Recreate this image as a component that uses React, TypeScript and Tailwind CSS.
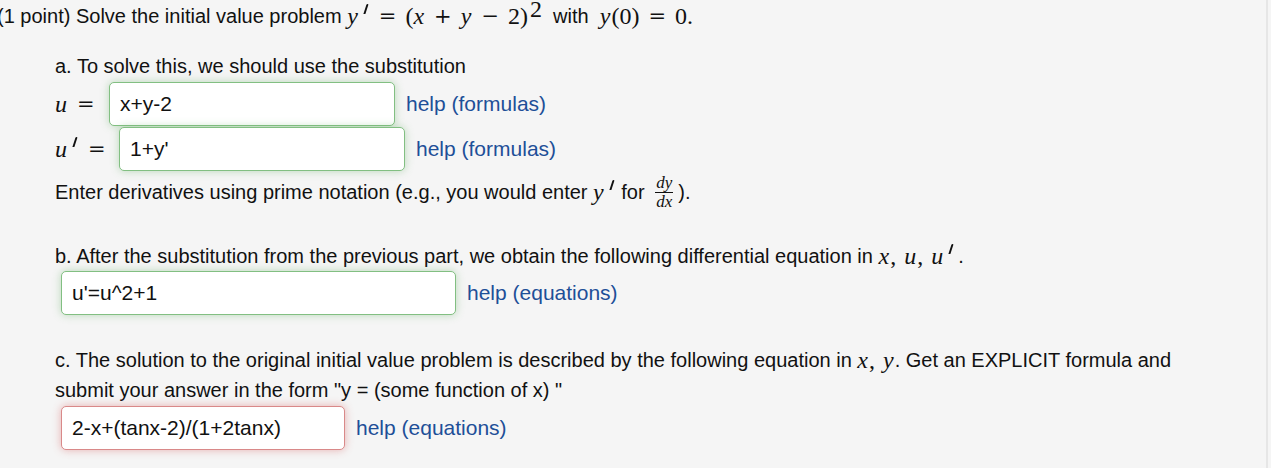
import React from 'react';

// ── Math helpers (TeX-like serif) ─────────────────────────────────────────────

function V({ children }: { children: React.ReactNode }) {
  return (
    <span className="font-['Liberation_Serif',serif] italic text-[24px] leading-none tracking-[1px]">{children}</span>
  );
}

function R({ children, className = '' }: { children: React.ReactNode; className?: string }) {
  return <span className={`font-['Liberation_Serif',serif] text-[24px] leading-none ${className}`}>{children}</span>;
}

function Prime() {
  return (
    <span className="inline-block w-[2px] h-[10px] bg-[#111] rounded-t-[2px] skew-x-[-18deg] relative top-[-7px] ml-[6px] mr-[3px]" />
  );
}

function Op({ children }: { children: React.ReactNode }) {
  return <span className="font-['DejaVu_Serif',serif] text-[21px] leading-none mx-[9px]">{children}</span>;
}

function Comma() {
  return <R className="mr-[8px]">,</R>;
}

// ── Answer box ────────────────────────────────────────────────────────────────

function Answer({ value, width, bad }: { value: string; width: string; bad?: boolean }) {
  return (
    <div
      className={`${width} h-[44px] flex items-center pl-[10px] bg-white rounded-[5px] border text-[21px] text-[#111] ${
        bad
          ? 'border-[#d98989] shadow-[0_0_8px_rgba(214,90,90,0.45)]'
          : 'border-[#82bf82] shadow-[0_0_8px_rgba(110,180,110,0.45)]'
      }`}
    >
      {value}
    </div>
  );
}

function Help({ label }: { label: string }) {
  return <span className="text-[#1e4f98] text-[21px] ml-[11px]">{label}</span>;
}

export default function App() {
  return (
    <div className="w-[1271px] h-[468px] bg-[#f5f5f5] overflow-hidden flex font-['Liberation_Sans',Arial,sans-serif] text-[#111]">
      <div className="w-[1268px] h-full border-r-2 border-[#e6e6e6]">
        {/* Header */}
        <div className="h-[32px] flex items-center ml-[-3px] text-[20px] whitespace-nowrap">
          <span>(1 point) Solve the initial value problem&nbsp;</span>
          <V>y</V>
          <Prime />
          <Op>=</Op>
          <R>(</R>
          <V>x</V>
          <Op>+</Op>
          <V>y</V>
          <Op>−</Op>
          <R>2)</R>
          <R className="text-[17px] relative top-[-7px] ml-[2px]">2</R>
          <span>&nbsp;&nbsp;with&nbsp;&nbsp;</span>
          <V>y</V>
          <R>(0)</R>
          <Op>=</Op>
          <R>0.</R>
        </div>

        {/* Part a */}
        <div className="pl-[55px] text-[20px]">
          <div className="mt-[19px] h-[30px] flex items-center">
            a. To solve this, we should use the substitution
          </div>
          <div className="mt-[1px] h-[44px] flex items-center">
            <div className="w-[54px] flex items-center">
              <V>u</V>
              <Op>=</Op>
            </div>
            <Answer value="x+y-2" width="w-[286px]" />
            <Help label="help (formulas)" />
          </div>
          <div className="mt-[1px] h-[44px] flex items-center">
            <div className="w-[64px] flex items-center">
              <V>u</V>
              <Prime />
              <Op>=</Op>
            </div>
            <Answer value="1+y'" width="w-[286px]" />
            <Help label="help (formulas)" />
          </div>
          <div className="h-[42px] flex items-center whitespace-nowrap">
            <span>Enter derivatives using prime notation (e.g., you would enter&nbsp;</span>
            <V>y</V>
            <Prime />
            <span>&nbsp;for&nbsp;</span>
            <span className="inline-flex flex-col items-center font-['Liberation_Serif',serif] italic text-[17px] leading-[18px] mx-[5px]">
              <span className="px-[1px]">dy</span>
              <span className="w-full border-t border-[#111]" />
              <span className="px-[1px]">dx</span>
            </span>
            <span>).</span>
          </div>

          {/* Part b */}
          <div className="mt-[28px] h-[30px] flex items-center whitespace-nowrap">
            <span>b. After the substitution from the previous part, we obtain the following differential equation in&nbsp;</span>
            <V>x</V>
            <Comma />
            <V>u</V>
            <Comma />
            <V>u</V>
            <Prime />
            <span className="ml-[3px]">.</span>
          </div>
          <div className="h-[44px] flex items-center pl-[6px]">
            <Answer value="u'=u^2+1" width="w-[395px]" />
            <Help label="help (equations)" />
          </div>

          {/* Part c */}
          <div className="mt-[30px] h-[30px] flex items-center whitespace-nowrap">
            <span>c. The solution to the original initial value problem is described by the following equation in&nbsp;</span>
            <V>x</V>
            <Comma />
            <V>y</V>
            <span>. Get an EXPLICIT formula and</span>
          </div>
          <div className="h-[30px] flex items-center">submit your answer in the form "y = (some function of x) "</div>
          <div className="mt-[1px] h-[44px] flex items-center pl-[6px]">
            <Answer value="2-x+(tanx-2)/(1+2tanx)" width="w-[284px]" bad />
            <Help label="help (equations)" />
          </div>
        </div>
      </div>
    </div>
  );
}
